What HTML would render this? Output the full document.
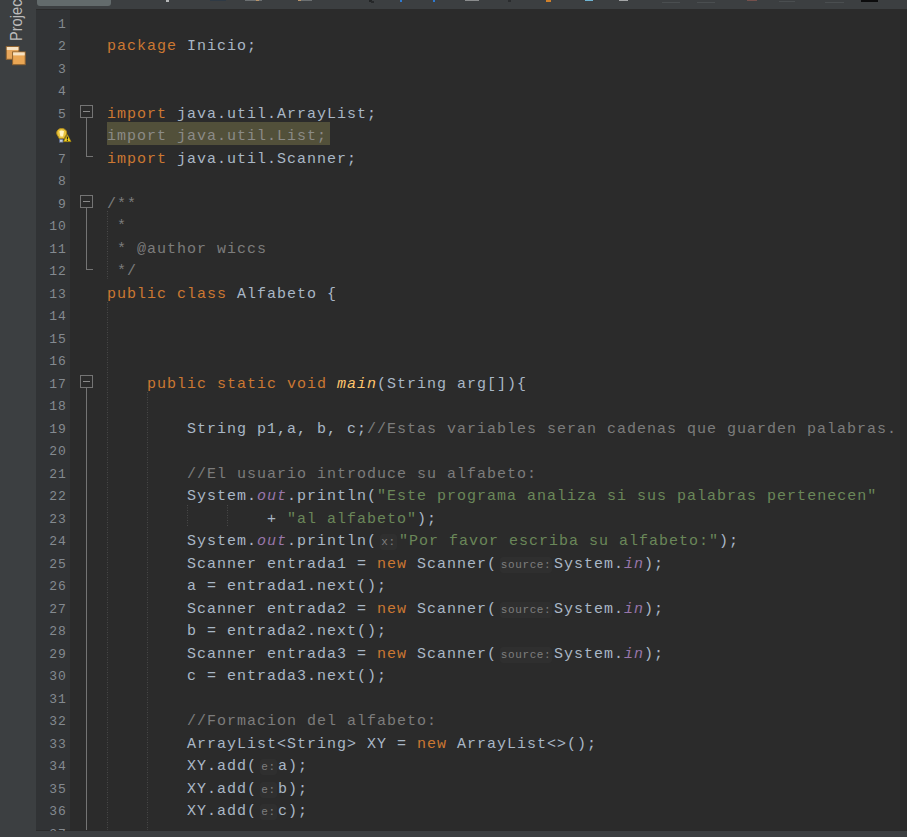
<!DOCTYPE html>
<html><head><meta charset="utf-8"><title>Alfabeto.java</title>
<style>
html,body{margin:0;padding:0;background:#2b2b2b;}
#root{position:relative;width:907px;height:837px;overflow:hidden;background:#2b2b2b;font-family:"Liberation Mono",monospace;}
#root *{box-sizing:border-box;}
.abs{position:absolute;}
#left{left:0;top:0;width:36px;height:837px;background:#3c3f41;}
#top{left:0;top:0;width:907px;height:9px;background:#3c3f41;}
#top i{position:absolute;display:block;}
#topline{left:36px;top:9px;width:871px;height:1px;background:#2b2b2b;}
#tab{left:37px;top:-4px;width:74px;height:10.3px;border-radius:3px;background:#636b6c;}
#bottom{left:0;top:831px;width:907px;height:6px;background:#3c3f41;}
#gutter{left:36px;top:10px;width:34px;height:820px;background:#313335;}
#code .n{display:inline-block;width:71px;padding-right:40.1px;text-align:right;font-size:13px;letter-spacing:1.0px;color:#848a90;line-height:22.5px;height:22.5px;vertical-align:baseline;}
#code{left:36px;top:13.758px;font-size:15.0px;letter-spacing:1.000px;color:#a9b7c6;}
#code .ln{height:22.5px;line-height:22.5px;white-space:pre;}
.k{color:#cc7832;} .c{color:#7c7c7c;} .s{color:#6a8759;} .f{color:#9876aa;font-style:italic;} .m{color:#ffc66d;font-style:italic;}
.u{color:#8b8b87;}
.hint{display:inline-block;font-size:11px;letter-spacing:0.6px;color:#7e7e7e;text-align:center;vertical-align:baseline;line-height:16px;height:16px;background:#2f2f2f;border-radius:3px;position:relative;}
.hint.w2{width:17px;margin:0 2px 0 3px;}
.hint.he{margin:0 1px 0 3px;}
.hint.w7{width:52px;margin:0 2px 0 3px;}
#hl{left:107px;top:122px;width:222.600px;height:23px;background:#52503a;}
.guide{width:1px;background-image:linear-gradient(#4e4e4e 42%,transparent 42%);background-size:1px 2.5px;}
.fbox{width:13px;height:13px;border:1px solid #747474;}
.fbox:after{content:"";position:absolute;left:2px;top:5px;width:7px;height:1px;background:#8a8a8a;}
.fline{background:#747474;}
#proj{left:8.1px;top:41px;transform-origin:0 0;transform:rotate(-90deg) scaleX(0.86);font-family:"Liberation Sans",sans-serif;font-size:17px;color:#bbbbbb;white-space:nowrap;line-height:18px;height:18px;}
</style></head><body>
<div id="root">
<div id="gutter" class="abs"></div>
<div id="hl" class="abs"></div>
<!-- indent guides -->
<div class="abs guide" style="left:107px;top:211px;height:67.500px;"></div>
<div class="abs guide" style="left:107px;top:302px;height:528px;"></div>
<div class="abs guide" style="left:147px;top:392px;height:438px;"></div>
<div class="abs guide" style="left:187px;top:505px;height:22px;"></div>
<div class="abs guide" style="left:227px;top:505px;height:22px;"></div>
<!-- folding -->
<div class="abs fbox" style="left:80px;top:105px;"></div>
<div class="abs fline" style="left:86px;top:118px;width:1px;height:39px;"></div>
<div class="abs fline" style="left:86px;top:156px;width:7px;height:1px;"></div>
<div class="abs fbox" style="left:80px;top:195px;"></div>
<div class="abs fline" style="left:86px;top:208px;width:1px;height:62px;"></div>
<div class="abs fline" style="left:86px;top:269px;width:7px;height:1px;"></div>
<div class="abs fbox" style="left:80px;top:375px;"></div>
<div class="abs fline" style="left:86px;top:388px;width:1px;height:442px;"></div>
<div id="code" class="abs">
<div class="ln"><span class="n">1</span></div>
<div class="ln"><span class="n">2</span><span class="k">package</span> Inicio;</div>
<div class="ln"><span class="n">3</span></div>
<div class="ln"><span class="n">4</span></div>
<div class="ln"><span class="n">5</span><span class="k">import</span> java.util.ArrayList;</div>
<div class="ln"><span class="n">&nbsp;</span><span class="u">import java.util.List;</span></div>
<div class="ln"><span class="n">7</span><span class="k">import</span> java.util.Scanner;</div>
<div class="ln"><span class="n">8</span></div>
<div class="ln"><span class="n">9</span><span class="c">/**</span></div>
<div class="ln"><span class="n">10</span><span class="c"> *</span></div>
<div class="ln"><span class="n">11</span><span class="c"> * @author wiccs</span></div>
<div class="ln"><span class="n">12</span><span class="c"> */</span></div>
<div class="ln"><span class="n">13</span><span class="k">public class</span> Alfabeto {</div>
<div class="ln"><span class="n">14</span></div>
<div class="ln"><span class="n">15</span></div>
<div class="ln"><span class="n">16</span></div>
<div class="ln"><span class="n">17</span>    <span class="k">public static void</span> <span class="m">main</span>(String arg[]){</div>
<div class="ln"><span class="n">18</span></div>
<div class="ln"><span class="n">19</span>        String p1,a, b, c;<span class="c">//Estas variables seran cadenas que guarden palabras.</span></div>
<div class="ln"><span class="n">20</span></div>
<div class="ln"><span class="n">21</span>        <span class="c">//El usuario introduce su alfabeto:</span></div>
<div class="ln"><span class="n">22</span>        System.<span class="f">out</span>.println(<span class="s">"Este programa analiza si sus palabras pertenecen"</span></div>
<div class="ln"><span class="n">23</span>                + <span class="s">"al alfabeto"</span>);</div>
<div class="ln"><span class="n">24</span>        System.<span class="f">out</span>.println(<span class="hint w2">x:</span><span class="s">"Por favor escriba su alfabeto:"</span>);</div>
<div class="ln"><span class="n">25</span>        Scanner entrada1 = <span class="k">new</span> Scanner(<span class="hint w7">source:</span>System.<span class="f">in</span>);</div>
<div class="ln"><span class="n">26</span>        a = entrada1.next();</div>
<div class="ln"><span class="n">27</span>        Scanner entrada2 = <span class="k">new</span> Scanner(<span class="hint w7">source:</span>System.<span class="f">in</span>);</div>
<div class="ln"><span class="n">28</span>        b = entrada2.next();</div>
<div class="ln"><span class="n">29</span>        Scanner entrada3 = <span class="k">new</span> Scanner(<span class="hint w7">source:</span>System.<span class="f">in</span>);</div>
<div class="ln"><span class="n">30</span>        c = entrada3.next();</div>
<div class="ln"><span class="n">31</span></div>
<div class="ln"><span class="n">32</span>        <span class="c">//Formacion del alfabeto:</span></div>
<div class="ln"><span class="n">33</span>        ArrayList&lt;String&gt; XY = <span class="k">new</span> ArrayList&lt;&gt;();</div>
<div class="ln"><span class="n">34</span>        XY.add(<span class="hint w2 he">e:</span>a);</div>
<div class="ln"><span class="n">35</span>        XY.add(<span class="hint w2 he">e:</span>b);</div>
<div class="ln"><span class="n">36</span>        XY.add(<span class="hint w2 he">e:</span>c);</div>
<div class="ln"><span class="n">37</span></div>
</div>
<!-- bulb icon -->
<svg class="abs" style="left:56px;top:128px" width="16" height="16" viewBox="0 0 16 16">
<path d="M0.700 5C0.700 2 3 0.500 5.700 0.500S10.700 2 10.700 5C10.700 7.500 8.600 8.400 8.300 10.500H3.100C2.800 8.400 0.700 7.500 0.700 5Z" fill="#e9c53e" stroke="#b08a1a" stroke-width="1"/>
<path d="M3.300 3.200C4 2.300 7 2.200 8 3.200L7 8.500H4.400Z" fill="#fff4c4"/>
<rect x="3.400" y="11.200" width="3.600" height="3" fill="#c8d0e0" stroke="#56668a" stroke-width="0.800"/>
<path d="M11.300 6.600L15 13.600H7.600Z" fill="#f4d51c" stroke="#a8860c" stroke-width="0.700"/>
<rect x="10.800" y="8.600" width="1.100" height="2.800" fill="#1a1a1a"/><rect x="10.800" y="11.900" width="1.100" height="1" fill="#1a1a1a"/>
</svg>
<div id="left" class="abs"></div>
<div id="top" class="abs"><i style="left:166px;top:0px;width:3px;height:1.5px;background:#b5b7b8"></i><i style="left:210px;top:0px;width:16px;height:1px;background:#2f3a45"></i><i style="left:245px;top:0px;width:17px;height:1px;background:#6b6f71"></i><i style="left:256px;top:0px;width:3px;height:1.2px;background:#b8946a"></i><i style="left:298px;top:0px;width:14px;height:1px;background:#6b6f71"></i><i style="left:298px;top:0px;width:3px;height:1.2px;background:#b8946a"></i><i style="left:369px;top:0px;width:3px;height:1.5px;background:#222425"></i><i style="left:371px;top:1px;width:3px;height:1.5px;background:#26282a"></i><i style="left:400px;top:0px;width:2px;height:1.5px;background:#2f7ad0"></i><i style="left:433px;top:0px;width:2px;height:1.5px;background:#2f7ad0"></i><i style="left:465px;top:0px;width:14px;height:1px;background:#8a8c8d"></i><i style="left:508px;top:0px;width:3px;height:1.5px;background:#2a2c2e"></i><i style="left:546px;top:0px;width:5px;height:1.6px;background:#d0802a"></i><i style="left:585px;top:0px;width:8px;height:1px;background:#6fb4d2"></i><i style="left:619px;top:0px;width:9px;height:1px;background:#a4a6a7"></i><i style="left:662px;top:2px;width:18px;height:1px;background:#4a4e50"></i><i style="left:697px;top:2px;width:18px;height:1px;background:#4a4e50"></i><i style="left:747px;top:0px;width:10px;height:0.8px;background:#74504c"></i><i style="left:779px;top:1px;width:16px;height:1px;background:#4a4e50"></i><i style="left:825px;top:2px;width:19px;height:1px;background:#4a4e50"></i><i style="left:861px;top:0px;width:17px;height:2px;background:#0c0c0d"></i></div>
<div id="topline" class="abs"></div>
<div id="tab" class="abs"></div>
<div id="proj" class="abs">Project</div>
<!-- project icon -->
<svg class="abs" style="left:4.900px;top:45px" width="22" height="22" viewBox="0 0 22 22">
<rect x="1.300" y="1.500" width="12.600" height="12.800" fill="#e6a65c" stroke="#8e6230" stroke-width="1"/>
<rect x="1.800" y="2" width="11.600" height="3" fill="#f7e2c2"/>
<rect x="7.600" y="6.900" width="12.600" height="12.800" fill="#eaa654" stroke="#8e6230" stroke-width="1"/>
<rect x="8.100" y="7.400" width="11.600" height="3" fill="#f7e2c2"/>
</svg>
<div id="bottom" class="abs"></div>
</div>
</body></html>
